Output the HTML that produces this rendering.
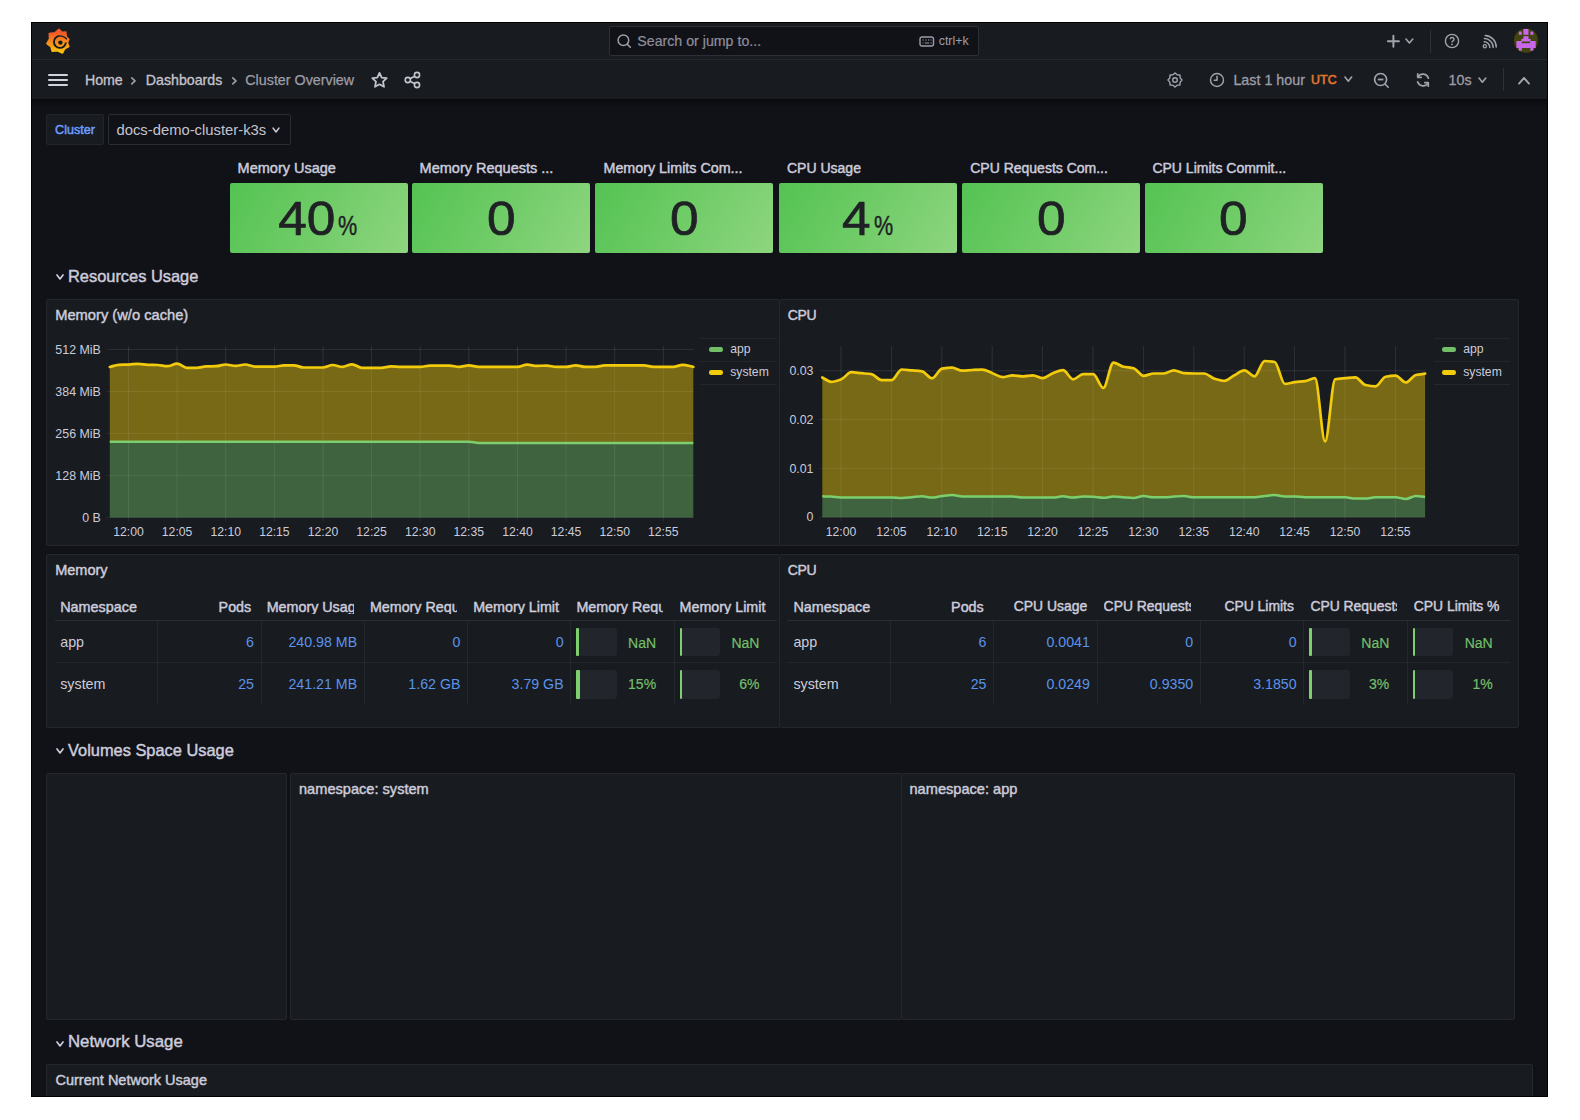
<!DOCTYPE html><html><head><meta charset="utf-8"><style>
*{box-sizing:border-box;margin:0;padding:0}
html,body{width:1580px;height:1120px;background:#fff;overflow:hidden}
body{position:relative;font-family:"Liberation Sans",sans-serif;color:#ccccdc}
.a{position:absolute}
.t{position:absolute;white-space:nowrap;line-height:1}
.m{-webkit-text-stroke:0.45px currentColor}
#app{position:absolute;left:31px;top:22px;width:1517px;height:1075px;background:#111217;border:1px solid #000;overflow:hidden}
.bar{position:absolute;left:32px;width:1515px;background:#181b1f}
.panel{position:absolute;background:#181b1f;border:1px solid #24272c;border-radius:2px}
.stat{position:absolute;top:183px;height:69.5px;width:178px;border-radius:2px;background:linear-gradient(120deg,#54c353 0%,#6dcb65 45%,#8ed57f 100%)}
.gauge{position:absolute;width:40.5px;height:28.5px;background:#22252b;border-radius:3px}
.gauge i{position:absolute;left:0;top:0;bottom:0;width:3px;background:#7fcf6e;border-radius:1px}
.icon{position:absolute;overflow:visible}
</style></head><body>
<div id="app"></div>
<div class="bar" style="top:23px;height:36px"></div>
<div class="a" style="left:32px;top:59px;width:1515px;height:1px;background:#25282d"></div>
<div class="bar" style="top:60px;height:39px"></div>
<div class="a" style="left:32px;top:99px;width:1515px;height:1px;background:#08090b"></div>
<div class="a" style="left:32px;top:100px;width:1515px;height:8px;background:linear-gradient(rgba(8,9,11,0.75),rgba(17,18,23,0))"></div>
<svg class="icon" style="left:44px;top:27px" width="28" height="28" viewBox="0 0 28 28">
<defs><linearGradient id="lg" x1="0" y1="0" x2="0" y2="1"><stop offset="0.15" stop-color="#f25a2a"/><stop offset="0.5" stop-color="#f6861e"/><stop offset="1" stop-color="#fcc80c"/></linearGradient></defs>
<polygon fill="url(#lg)" points="15.0,2.3 17.9,5.2 21.8,5.0 22.1,9.5 24.8,12.3 23.4,15.8 24.8,19.5 20.7,21.7 18.5,26.0 13.6,23.7 8.3,24.3 6.9,19.6 3.0,16.5 5.6,12.0 5.3,6.5 10.8,5.9" stroke="url(#lg)" stroke-width="1.6" stroke-linejoin="round"/>
<path d="M15.5,8.9 A6,6 0 1 0 21.9,15.5" fill="none" stroke="#181b1f" stroke-width="1.9"/>
<path d="M15.5,8.9 Q20,8.9 22.8,12.3" fill="none" stroke="#181b1f" stroke-width="1.4"/>
<circle cx="16.4" cy="15.6" r="2.2" fill="#181b1f"/>
</svg>
<div class="a" style="left:609px;top:26.4px;width:370px;height:29.6px;background:#111217;border:1px solid #2c2f35;border-radius:2px"></div>
<svg class="icon" style="left:616px;top:33px" width="16" height="16" viewBox="0 0 16 16"><circle cx="7.4" cy="7.3" r="5.3" fill="none" stroke="#9d9da8" stroke-width="1.5"/><path d="M11.3,11.2 L14.3,14.2" stroke="#9d9da8" stroke-width="1.6" stroke-linecap="round"/></svg>
<div class="t m" style="left:637.3px;top:34.23px;font-size:14.2px;color:#8f8f9b;-webkit-text-stroke-width:0.2px">Search or jump to...</div>
<svg class="icon" style="left:919px;top:35.5px" width="16" height="11" viewBox="0 0 16 11"><rect x="1" y="1" width="13.5" height="9" rx="2" fill="none" stroke="#9d9da8" stroke-width="1.4"/><path d="M3.6,4h1.2M6.3,4h1.2M9,4h1.2M11.5,4h1M3.6,7h0.8M5.8,7h4.4M11.5,7h1" stroke="#9d9da8" stroke-width="1.2"/></svg>
<div class="t" style="left:938.7px;top:34.56px;font-size:12.4px;color:#9d9da8;">ctrl+k</div>
<svg class="icon" style="left:1386px;top:34px" width="16" height="14"><path d="M7.4,1.8V12.8M1.9,7.3H12.9" stroke="#a3a3ae" stroke-width="2" stroke-linecap="round"/></svg>
<svg class="a" style="left:1404.2px;top:37.3px" width="10.8" height="8.0"><path d="M2,2L5.4,6.0L8.8,2" fill="none" stroke="#a3a3ae" stroke-width="1.6" stroke-linecap="round" stroke-linejoin="round"/></svg>
<div class="a" style="left:1430px;top:30px;width:1px;height:22.5px;background:#2f3237"></div>
<svg class="icon" style="left:1444px;top:33px" width="16" height="16" viewBox="0 0 16 16"><circle cx="8" cy="8" r="6.6" fill="none" stroke="#a3a3ae" stroke-width="1.4"/><path d="M6.2,6.3a1.9,1.9 0 1 1 2.6,1.8c-0.5,0.2-0.8,0.6-0.8,1.1v0.4" fill="none" stroke="#a3a3ae" stroke-width="1.4"/><circle cx="8" cy="11.4" r="0.85" fill="#a3a3ae"/></svg>
<svg class="icon" style="left:1482px;top:34px" width="16" height="16" viewBox="0 0 16 16"><circle cx="2.8" cy="12.2" r="1.6" fill="none" stroke="#a3a3ae" stroke-width="1.3"/><path d="M2.2,7.8a5.6,5.6 0 0 1 5.6,5.6M2.4,4.6a8.8,8.8 0 0 1 8.8,8.8M3.2,1.5a11.5,11.5 0 0 1 11,11.5" fill="none" stroke="#a3a3ae" stroke-width="1.5" stroke-linecap="round"/></svg>
<svg class="icon" style="left:1510px;top:26px" width="32" height="30" viewBox="0 0 32 30"><circle cx="16" cy="14.6" r="12.1" fill="#41440e"/>
<g fill="#c868e8"><rect x="13.4" y="3" width="5.1" height="5.8"/><rect x="8.8" y="5.6" width="3" height="3.2"/><rect x="20.4" y="5.6" width="2.9" height="3.2"/><rect x="13.4" y="10.2" width="5.1" height="2.9"/><rect x="11.3" y="12.9" width="9.3" height="2.7"/><rect x="6.4" y="15" width="19.3" height="7"/><rect x="8.8" y="21.8" width="3" height="2.9"/><rect x="20.4" y="21.8" width="2.9" height="2.9"/></g>
<rect x="11.8" y="15.5" width="8.3" height="1.7" fill="#41440e"/></svg>
<div class="a" style="left:48px;top:74px;width:19.7px;height:2.2px;background:#d2d2de;border-radius:1px"></div>
<div class="a" style="left:48px;top:79px;width:19.7px;height:2.2px;background:#d2d2de;border-radius:1px"></div>
<div class="a" style="left:48px;top:84px;width:19.7px;height:2.2px;background:#d2d2de;border-radius:1px"></div>
<div class="t m" style="left:84.9px;top:73.23px;font-size:14.2px;color:#c4c4d0;-webkit-text-stroke-width:0.3px">Home</div>
<svg class="icon" style="left:130.2px;top:75.6px" width="8" height="10" viewBox="0 0 8 10"><path d="M1.8,1.9L5,4.9L1.8,7.9" fill="none" stroke="#9d9da8" stroke-width="1.7" stroke-linecap="round" stroke-linejoin="round"/></svg>
<div class="t m" style="left:145.8px;top:73.23px;font-size:14.2px;color:#c4c4d0;-webkit-text-stroke-width:0.3px">Dashboards</div>
<svg class="icon" style="left:230.5px;top:75.6px" width="8" height="10" viewBox="0 0 8 10"><path d="M1.8,1.9L5,4.9L1.8,7.9" fill="none" stroke="#9d9da8" stroke-width="1.7" stroke-linecap="round" stroke-linejoin="round"/></svg>
<div class="t m" style="left:245.3px;top:73.14px;font-size:14.3px;color:#9d9da8;-webkit-text-stroke-width:0.25px">Cluster Overview</div>
<svg class="icon" style="left:370.0px;top:71.0px" width="19" height="18" viewBox="0 0 19 18"><path d="M9.5,1.9L11.7,6.6L16.7,7.2L13,10.7L14,15.8L9.5,13.3L5,15.8L6,10.7L2.3,7.2L7.3,6.6Z" fill="none" stroke="#c4c4d0" stroke-width="1.8" stroke-linejoin="round"/></svg>
<svg class="icon" style="left:403.0px;top:71.0px" width="19" height="18" viewBox="0 0 19 18"><circle cx="4.8" cy="9" r="2.6" fill="none" stroke="#c4c4d0" stroke-width="1.6"/><circle cx="14" cy="4" r="2.6" fill="none" stroke="#c4c4d0" stroke-width="1.6"/><circle cx="14" cy="14" r="2.6" fill="none" stroke="#c4c4d0" stroke-width="1.6"/><path d="M7,7.8L11.8,5.2M7,10.2L11.8,12.8" stroke="#c4c4d0" stroke-width="1.6"/></svg>
<svg class="icon" style="left:1166.5px;top:71.5px" width="16" height="16" viewBox="0 0 16 16"><path d="M8.00,1.00 L10.14,2.83 L12.95,3.05 L13.17,5.86 L15.00,8.00 L13.17,10.14 L12.95,12.95 L10.14,13.17 L8.00,15.00 L5.86,13.17 L3.05,12.95 L2.83,10.14 L1.00,8.00 L2.83,5.86 L3.05,3.05 L5.86,2.83Z" fill="none" stroke="#a3a3ae" stroke-width="1.4" stroke-linejoin="round"/><circle cx="8" cy="8" r="2.3" fill="none" stroke="#a3a3ae" stroke-width="1.4"/></svg>
<svg class="icon" style="left:1208.5px;top:71.5px" width="16" height="16" viewBox="0 0 16 16"><circle cx="8" cy="8" r="6.5" fill="none" stroke="#a3a3ae" stroke-width="1.4"/><path d="M8,4.3V8.2H5.3" fill="none" stroke="#a3a3ae" stroke-width="1.5" stroke-linecap="round" stroke-linejoin="round"/></svg>
<div class="t m" style="left:1233.4px;top:72.94px;font-size:14.3px;color:#9d9da8;-webkit-text-stroke-width:0.3px">Last 1 hour</div>
<div class="t m" style="left:1310.9px;top:74.16px;font-size:12.4px;color:#e0762e;-webkit-text-stroke-width:0.6px;letter-spacing:0.2px">UTC</div>
<svg class="a" style="left:1343.0px;top:75.2px" width="10.6" height="8.2"><path d="M2,2L5.3,6.2L8.6,2" fill="none" stroke="#a3a3ae" stroke-width="1.6" stroke-linecap="round" stroke-linejoin="round"/></svg>
<svg class="icon" style="left:1372.5px;top:71.5px" width="17" height="17" viewBox="0 0 17 17"><circle cx="7.6" cy="7.5" r="6" fill="none" stroke="#a3a3ae" stroke-width="1.7"/><path d="M4.8,7.5H10.4" stroke="#a3a3ae" stroke-width="1.8"/><path d="M12,12L15.2,15.2" stroke="#a3a3ae" stroke-width="1.6" stroke-linecap="round"/></svg>
<svg class="icon" style="left:1415.0px;top:71.5px" width="16" height="16" viewBox="0 0 16 16"><g transform="translate(16,0) scale(-1,1)"><path d="M2.6,6.2A5.8,5.8 0 0 1 13,4.8M13.4,9.8A5.8,5.8 0 0 1 3,11.2" fill="none" stroke="#a3a3ae" stroke-width="1.7" stroke-linecap="round"/><path d="M13.3,1.8V5.3H9.8M2.7,14.2V10.7H6.2" fill="none" stroke="#a3a3ae" stroke-width="1.7" stroke-linecap="round" stroke-linejoin="round"/></g></svg>
<div class="t m" style="left:1448.6px;top:73.14px;font-size:14.3px;color:#9d9da8;-webkit-text-stroke-width:0.3px">10s</div>
<svg class="a" style="left:1477.2px;top:75.6px" width="10.8" height="8.2"><path d="M2,2L5.4,6.2L8.8,2" fill="none" stroke="#a3a3ae" stroke-width="1.6" stroke-linecap="round" stroke-linejoin="round"/></svg>
<div class="a" style="left:1503px;top:68px;width:1px;height:23px;background:#2f3237"></div>
<svg class="a" style="left:1517.0px;top:75.5px" width="14.0" height="9.6"><path d="M2,7.6L7.0,2L12.0,7.6" fill="none" stroke="#a3a3ae" stroke-width="1.9" stroke-linecap="round" stroke-linejoin="round"/></svg>
<div class="a" style="left:46.4px;top:114.4px;width:57.6px;height:30.2px;background:#181b1f;border:1px solid #22252a;border-radius:2px"></div>
<div class="t m" style="left:55.1px;top:124.09px;font-size:12.6px;color:#6e9fff;">Cluster</div>
<div class="a" style="left:108px;top:114.4px;width:183px;height:30.2px;background:#111217;border:1px solid #2a2d33;border-radius:2px"></div>
<div class="t" style="left:116.5px;top:123.12px;font-size:14.8px;color:#c4c4d0;">docs-demo-cluster-k3s</div>
<svg class="a" style="left:271.0px;top:125.6px" width="10.0" height="8.0"><path d="M2,2L5.0,6.0L8.0,2" fill="none" stroke="#ccccdc" stroke-width="1.4" stroke-linecap="round" stroke-linejoin="round"/></svg>
<div class="t m" style="left:237.6px;top:160.88px;font-size:14.5px;color:#ccccdc;">Memory Usage</div>
<div class="stat" style="left:229.6px"></div>
<div class="t" style="left:229.6px;width:178px;top:194.50px;text-align:center;font-size:48px;color:#1f2125;-webkit-text-stroke:0.7px #1f2125"><span style="display:inline-block;transform:scaleX(1.07)">40</span><span style="display:inline-block;font-size:27px;-webkit-text-stroke:0.4px #1f2125;transform:scaleX(0.8);transform-origin:0 0;margin-left:4.5px;margin-right:-5px">%</span></div>
<div class="t m" style="left:419.6px;top:160.88px;font-size:14.5px;color:#ccccdc;">Memory Requests ...</div>
<div class="stat" style="left:412.1px"></div>
<div class="t" style="left:412.1px;width:178px;top:194.50px;text-align:center;font-size:48px;color:#1f2125;-webkit-text-stroke:0.7px #1f2125"><span style="display:inline-block;transform:scaleX(1.07)">0</span></div>
<div class="t m" style="left:603.5px;top:161.04px;font-size:14.3px;color:#ccccdc;">Memory Limits Com...</div>
<div class="stat" style="left:595.4px"></div>
<div class="t" style="left:595.4px;width:178px;top:194.50px;text-align:center;font-size:48px;color:#1f2125;-webkit-text-stroke:0.7px #1f2125"><span style="display:inline-block;transform:scaleX(1.07)">0</span></div>
<div class="t m" style="left:787.0px;top:161.30px;font-size:14.0px;color:#ccccdc;">CPU Usage</div>
<div class="stat" style="left:779.0px"></div>
<div class="t" style="left:779.0px;width:178px;top:194.50px;text-align:center;font-size:48px;color:#1f2125;-webkit-text-stroke:0.7px #1f2125"><span style="display:inline-block;transform:scaleX(1.07)">4</span><span style="display:inline-block;font-size:27px;-webkit-text-stroke:0.4px #1f2125;transform:scaleX(0.8);transform-origin:0 0;margin-left:4.5px;margin-right:-5px">%</span></div>
<div class="t m" style="left:970.2px;top:161.30px;font-size:14.0px;color:#ccccdc;">CPU Requests Com...</div>
<div class="stat" style="left:962.3px"></div>
<div class="t" style="left:962.3px;width:178px;top:194.50px;text-align:center;font-size:48px;color:#1f2125;-webkit-text-stroke:0.7px #1f2125"><span style="display:inline-block;transform:scaleX(1.07)">0</span></div>
<div class="t m" style="left:1152.4px;top:161.30px;font-size:14.0px;color:#ccccdc;">CPU Limits Commit...</div>
<div class="stat" style="left:1144.5px"></div>
<div class="t" style="left:1144.5px;width:178px;top:194.50px;text-align:center;font-size:48px;color:#1f2125;-webkit-text-stroke:0.7px #1f2125"><span style="display:inline-block;transform:scaleX(1.07)">0</span></div>
<svg class="a" style="left:54.6px;top:273.3px" width="10.0" height="7.9"><path d="M2,2L5.0,5.9L8.0,2" fill="none" stroke="#ccccdc" stroke-width="1.7" stroke-linecap="round" stroke-linejoin="round"/></svg>
<div class="t m" style="left:68.0px;top:267.86px;font-size:16.4px;color:#ccccdc;">Resources Usage</div>
<svg class="a" style="left:54.6px;top:747.4px" width="10.0" height="7.9"><path d="M2,2L5.0,5.9L8.0,2" fill="none" stroke="#ccccdc" stroke-width="1.7" stroke-linecap="round" stroke-linejoin="round"/></svg>
<div class="t m" style="left:68.0px;top:741.96px;font-size:16.4px;color:#ccccdc;">Volumes Space Usage</div>
<svg class="a" style="left:54.6px;top:1039.8px" width="10.0" height="7.9"><path d="M2,2L5.0,5.9L8.0,2" fill="none" stroke="#ccccdc" stroke-width="1.7" stroke-linecap="round" stroke-linejoin="round"/></svg>
<div class="t m" style="left:68.0px;top:1034.02px;font-size:16.8px;color:#ccccdc;">Network Usage</div>
<div class="panel" style="left:46px;top:298.5px;width:734px;height:247px"></div>
<div class="panel" style="left:779px;top:298.5px;width:739.5px;height:247px"></div>
<div class="t m" style="left:55.2px;top:307.90px;font-size:14.7px;color:#ccccdc;">Memory (w/o cache)</div>
<div class="t m" style="left:787.8px;top:308.20px;font-size:14px;color:#ccccdc;letter-spacing:-0.4px">CPU</div>
<svg class="a" style="left:0;top:0" width="1580" height="1120" viewBox="0 0 1580 1120"><path d="M106.3,517.6H693.8" stroke="rgba(204,204,220,0.09)" stroke-width="1"/><path d="M106.3,475.6H693.8" stroke="rgba(204,204,220,0.09)" stroke-width="1"/><path d="M106.3,433.6H693.8" stroke="rgba(204,204,220,0.09)" stroke-width="1"/><path d="M106.3,391.6H693.8" stroke="rgba(204,204,220,0.09)" stroke-width="1"/><path d="M106.3,349.6H693.8" stroke="rgba(204,204,220,0.09)" stroke-width="1"/><path d="M128.5,346V521.6" stroke="rgba(204,204,220,0.09)" stroke-width="1"/><path d="M177.1,346V521.6" stroke="rgba(204,204,220,0.09)" stroke-width="1"/><path d="M225.7,346V521.6" stroke="rgba(204,204,220,0.09)" stroke-width="1"/><path d="M274.4,346V521.6" stroke="rgba(204,204,220,0.09)" stroke-width="1"/><path d="M323.0,346V521.6" stroke="rgba(204,204,220,0.09)" stroke-width="1"/><path d="M371.6,346V521.6" stroke="rgba(204,204,220,0.09)" stroke-width="1"/><path d="M420.2,346V521.6" stroke="rgba(204,204,220,0.09)" stroke-width="1"/><path d="M468.8,346V521.6" stroke="rgba(204,204,220,0.09)" stroke-width="1"/><path d="M517.5,346V521.6" stroke="rgba(204,204,220,0.09)" stroke-width="1"/><path d="M566.1,346V521.6" stroke="rgba(204,204,220,0.09)" stroke-width="1"/><path d="M614.7,346V521.6" stroke="rgba(204,204,220,0.09)" stroke-width="1"/><path d="M663.3,346V521.6" stroke="rgba(204,204,220,0.09)" stroke-width="1"/><path d="M109.80,367.00 C112.79,366.27 115.78,364.91 118.77,364.80 C122.02,364.68 125.26,364.71 128.50,364.60 C131.74,364.49 134.98,363.80 138.22,363.80 C141.46,363.80 144.70,364.69 147.95,364.80 C151.19,364.91 154.43,364.89 157.67,365.00 C160.91,365.11 164.15,366.20 167.39,366.20 C170.64,366.20 173.88,363.60 177.12,363.60 C180.36,363.60 183.60,367.80 186.84,367.80 C190.08,367.80 193.32,367.80 196.57,367.80 C199.81,367.80 203.05,366.52 206.29,366.40 C209.53,366.28 212.77,366.32 216.01,366.20 C219.26,366.08 222.50,364.50 225.74,364.50 C228.98,364.50 232.22,365.90 235.46,365.90 C238.70,365.90 241.94,364.50 245.19,364.50 C248.43,364.50 251.67,366.60 254.91,366.60 C258.15,366.60 261.39,366.60 264.63,366.60 C267.88,366.60 271.12,366.60 274.36,366.60 C277.60,366.60 280.84,365.30 284.08,365.30 C287.32,365.30 290.56,365.30 293.81,365.30 C297.05,365.30 300.29,367.50 303.53,367.50 C306.77,367.50 310.01,367.50 313.25,367.50 C316.50,367.50 319.74,367.50 322.98,367.50 C326.22,367.50 329.46,365.00 332.70,365.00 C335.94,365.00 339.18,366.90 342.43,366.90 C345.67,366.90 348.91,364.30 352.15,364.30 C355.39,364.30 358.63,367.80 361.87,367.80 C365.12,367.80 368.36,367.80 371.60,367.80 C374.84,367.80 378.08,367.80 381.32,367.80 C384.56,367.80 387.80,366.40 391.05,366.40 C394.29,366.40 397.53,366.75 400.77,366.80 C404.01,366.85 407.25,366.90 410.49,366.90 C413.74,366.90 416.98,366.90 420.22,366.90 C423.46,366.90 426.70,365.60 429.94,365.60 C433.18,365.60 436.42,365.60 439.67,365.60 C442.91,365.60 446.15,365.60 449.39,365.60 C452.63,365.60 455.87,366.90 459.11,366.90 C462.36,366.90 465.60,365.40 468.84,365.40 C472.08,365.40 475.32,366.90 478.56,366.90 C481.80,366.90 485.04,366.90 488.29,366.90 C491.53,366.90 494.77,366.90 498.01,366.90 C501.25,366.90 504.49,366.90 507.73,366.90 C510.98,366.90 514.22,366.90 517.46,366.90 C520.70,366.90 523.94,364.70 527.18,364.70 C530.42,364.70 533.66,365.90 536.91,365.90 C540.15,365.90 543.39,365.60 546.63,365.60 C549.87,365.60 553.11,366.90 556.35,366.90 C559.60,366.90 562.84,366.90 566.08,366.90 C569.32,366.90 572.56,365.30 575.80,365.30 C579.04,365.30 582.28,366.90 585.53,366.90 C588.77,366.90 592.01,366.90 595.25,366.90 C598.49,366.90 601.73,365.40 604.97,365.40 C608.22,365.40 611.46,365.40 614.70,365.40 C617.94,365.40 621.18,365.40 624.42,365.40 C627.66,365.40 630.90,365.40 634.15,365.40 C637.39,365.40 640.63,365.40 643.87,365.40 C647.11,365.40 650.35,366.90 653.59,366.90 C656.84,366.90 660.08,366.90 663.32,366.90 C666.56,366.90 669.80,366.90 673.04,366.90 C676.28,366.90 679.52,364.80 682.77,364.80 C686.28,364.80 689.79,366.20 693.30,366.90 L693.30,442.90 C689.79,442.90 686.28,442.90 682.77,442.90 C679.52,442.90 676.28,442.90 673.04,442.90 C669.80,442.90 666.56,442.90 663.32,442.90 C660.08,442.90 656.84,442.90 653.59,442.90 C650.35,442.90 647.11,442.90 643.87,442.90 C640.63,442.90 637.39,442.90 634.15,442.90 C630.90,442.90 627.66,442.90 624.42,442.90 C621.18,442.90 617.94,442.90 614.70,442.90 C611.46,442.90 608.22,442.90 604.97,442.90 C601.73,442.90 598.49,442.90 595.25,442.90 C592.01,442.90 588.77,442.90 585.53,442.90 C582.28,442.90 579.04,442.90 575.80,442.90 C572.56,442.90 569.32,442.90 566.08,442.90 C562.84,442.90 559.60,442.90 556.35,442.90 C553.11,442.90 549.87,442.90 546.63,442.90 C543.39,442.90 540.15,442.90 536.91,442.90 C533.66,442.90 530.42,442.90 527.18,442.90 C523.94,442.90 520.70,442.90 517.46,442.90 C514.22,442.90 510.98,442.90 507.73,442.90 C504.49,442.90 501.25,442.90 498.01,442.90 C494.77,442.90 491.53,442.90 488.29,442.90 C485.04,442.90 481.80,442.90 478.56,442.90 C475.32,442.90 472.08,441.70 468.84,441.70 C465.60,441.70 462.36,441.70 459.11,441.70 C455.87,441.70 452.63,441.70 449.39,441.70 C446.15,441.70 442.91,441.70 439.67,441.70 C436.42,441.70 433.18,441.70 429.94,441.70 C426.70,441.70 423.46,441.70 420.22,441.70 C416.98,441.70 413.74,441.70 410.49,441.70 C407.25,441.70 404.01,441.70 400.77,441.70 C397.53,441.70 394.29,441.70 391.05,441.70 C387.80,441.70 384.56,441.70 381.32,441.70 C378.08,441.70 374.84,441.70 371.60,441.70 C368.36,441.70 365.12,441.70 361.87,441.70 C358.63,441.70 355.39,441.70 352.15,441.70 C348.91,441.70 345.67,441.70 342.43,441.70 C339.18,441.70 335.94,441.70 332.70,441.70 C329.46,441.70 326.22,441.70 322.98,441.70 C319.74,441.70 316.50,441.70 313.25,441.70 C310.01,441.70 306.77,441.70 303.53,441.70 C300.29,441.70 297.05,441.70 293.81,441.70 C290.56,441.70 287.32,441.70 284.08,441.70 C280.84,441.70 277.60,441.70 274.36,441.70 C271.12,441.70 267.88,441.70 264.63,441.70 C261.39,441.70 258.15,441.70 254.91,441.70 C251.67,441.70 248.43,441.70 245.19,441.70 C241.94,441.70 238.70,441.70 235.46,441.70 C232.22,441.70 228.98,441.70 225.74,441.70 C222.50,441.70 219.26,441.70 216.01,441.70 C212.77,441.70 209.53,441.70 206.29,441.70 C203.05,441.70 199.81,441.70 196.57,441.70 C193.32,441.70 190.08,441.70 186.84,441.70 C183.60,441.70 180.36,441.70 177.12,441.70 C173.88,441.70 170.64,441.70 167.39,441.70 C164.15,441.70 160.91,441.70 157.67,441.70 C154.43,441.70 151.19,441.70 147.95,441.70 C144.70,441.70 141.46,441.70 138.22,441.70 C134.98,441.70 131.74,441.70 128.50,441.70 C125.26,441.70 122.02,441.70 118.77,441.70 C115.78,441.70 112.79,441.70 109.80,441.70 Z" fill="rgba(242,204,12,0.44)"/><path d="M109.80,441.70 C112.79,441.70 115.78,441.70 118.77,441.70 C122.02,441.70 125.26,441.70 128.50,441.70 C131.74,441.70 134.98,441.70 138.22,441.70 C141.46,441.70 144.70,441.70 147.95,441.70 C151.19,441.70 154.43,441.70 157.67,441.70 C160.91,441.70 164.15,441.70 167.39,441.70 C170.64,441.70 173.88,441.70 177.12,441.70 C180.36,441.70 183.60,441.70 186.84,441.70 C190.08,441.70 193.32,441.70 196.57,441.70 C199.81,441.70 203.05,441.70 206.29,441.70 C209.53,441.70 212.77,441.70 216.01,441.70 C219.26,441.70 222.50,441.70 225.74,441.70 C228.98,441.70 232.22,441.70 235.46,441.70 C238.70,441.70 241.94,441.70 245.19,441.70 C248.43,441.70 251.67,441.70 254.91,441.70 C258.15,441.70 261.39,441.70 264.63,441.70 C267.88,441.70 271.12,441.70 274.36,441.70 C277.60,441.70 280.84,441.70 284.08,441.70 C287.32,441.70 290.56,441.70 293.81,441.70 C297.05,441.70 300.29,441.70 303.53,441.70 C306.77,441.70 310.01,441.70 313.25,441.70 C316.50,441.70 319.74,441.70 322.98,441.70 C326.22,441.70 329.46,441.70 332.70,441.70 C335.94,441.70 339.18,441.70 342.43,441.70 C345.67,441.70 348.91,441.70 352.15,441.70 C355.39,441.70 358.63,441.70 361.87,441.70 C365.12,441.70 368.36,441.70 371.60,441.70 C374.84,441.70 378.08,441.70 381.32,441.70 C384.56,441.70 387.80,441.70 391.05,441.70 C394.29,441.70 397.53,441.70 400.77,441.70 C404.01,441.70 407.25,441.70 410.49,441.70 C413.74,441.70 416.98,441.70 420.22,441.70 C423.46,441.70 426.70,441.70 429.94,441.70 C433.18,441.70 436.42,441.70 439.67,441.70 C442.91,441.70 446.15,441.70 449.39,441.70 C452.63,441.70 455.87,441.70 459.11,441.70 C462.36,441.70 465.60,441.70 468.84,441.70 C472.08,441.70 475.32,442.90 478.56,442.90 C481.80,442.90 485.04,442.90 488.29,442.90 C491.53,442.90 494.77,442.90 498.01,442.90 C501.25,442.90 504.49,442.90 507.73,442.90 C510.98,442.90 514.22,442.90 517.46,442.90 C520.70,442.90 523.94,442.90 527.18,442.90 C530.42,442.90 533.66,442.90 536.91,442.90 C540.15,442.90 543.39,442.90 546.63,442.90 C549.87,442.90 553.11,442.90 556.35,442.90 C559.60,442.90 562.84,442.90 566.08,442.90 C569.32,442.90 572.56,442.90 575.80,442.90 C579.04,442.90 582.28,442.90 585.53,442.90 C588.77,442.90 592.01,442.90 595.25,442.90 C598.49,442.90 601.73,442.90 604.97,442.90 C608.22,442.90 611.46,442.90 614.70,442.90 C617.94,442.90 621.18,442.90 624.42,442.90 C627.66,442.90 630.90,442.90 634.15,442.90 C637.39,442.90 640.63,442.90 643.87,442.90 C647.11,442.90 650.35,442.90 653.59,442.90 C656.84,442.90 660.08,442.90 663.32,442.90 C666.56,442.90 669.80,442.90 673.04,442.90 C676.28,442.90 679.52,442.90 682.77,442.90 C686.28,442.90 689.79,442.90 693.30,442.90 L693.3,517.6 L109.8,517.6 Z" fill="rgba(115,191,105,0.44)"/><path d="M109.8,517.6H693.3" stroke="rgba(204,204,220,0.05)" stroke-width="1"/><path d="M109.8,475.6H693.3" stroke="rgba(204,204,220,0.05)" stroke-width="1"/><path d="M109.8,433.6H693.3" stroke="rgba(204,204,220,0.05)" stroke-width="1"/><path d="M109.8,391.6H693.3" stroke="rgba(204,204,220,0.05)" stroke-width="1"/><path d="M109.8,349.6H693.3" stroke="rgba(204,204,220,0.05)" stroke-width="1"/><path d="M128.5,346V517.6" stroke="rgba(204,204,220,0.05)" stroke-width="1"/><path d="M177.1,346V517.6" stroke="rgba(204,204,220,0.05)" stroke-width="1"/><path d="M225.7,346V517.6" stroke="rgba(204,204,220,0.05)" stroke-width="1"/><path d="M274.4,346V517.6" stroke="rgba(204,204,220,0.05)" stroke-width="1"/><path d="M323.0,346V517.6" stroke="rgba(204,204,220,0.05)" stroke-width="1"/><path d="M371.6,346V517.6" stroke="rgba(204,204,220,0.05)" stroke-width="1"/><path d="M420.2,346V517.6" stroke="rgba(204,204,220,0.05)" stroke-width="1"/><path d="M468.8,346V517.6" stroke="rgba(204,204,220,0.05)" stroke-width="1"/><path d="M517.5,346V517.6" stroke="rgba(204,204,220,0.05)" stroke-width="1"/><path d="M566.1,346V517.6" stroke="rgba(204,204,220,0.05)" stroke-width="1"/><path d="M614.7,346V517.6" stroke="rgba(204,204,220,0.05)" stroke-width="1"/><path d="M663.3,346V517.6" stroke="rgba(204,204,220,0.05)" stroke-width="1"/><path d="M109.80,441.70 C112.79,441.70 115.78,441.70 118.77,441.70 C122.02,441.70 125.26,441.70 128.50,441.70 C131.74,441.70 134.98,441.70 138.22,441.70 C141.46,441.70 144.70,441.70 147.95,441.70 C151.19,441.70 154.43,441.70 157.67,441.70 C160.91,441.70 164.15,441.70 167.39,441.70 C170.64,441.70 173.88,441.70 177.12,441.70 C180.36,441.70 183.60,441.70 186.84,441.70 C190.08,441.70 193.32,441.70 196.57,441.70 C199.81,441.70 203.05,441.70 206.29,441.70 C209.53,441.70 212.77,441.70 216.01,441.70 C219.26,441.70 222.50,441.70 225.74,441.70 C228.98,441.70 232.22,441.70 235.46,441.70 C238.70,441.70 241.94,441.70 245.19,441.70 C248.43,441.70 251.67,441.70 254.91,441.70 C258.15,441.70 261.39,441.70 264.63,441.70 C267.88,441.70 271.12,441.70 274.36,441.70 C277.60,441.70 280.84,441.70 284.08,441.70 C287.32,441.70 290.56,441.70 293.81,441.70 C297.05,441.70 300.29,441.70 303.53,441.70 C306.77,441.70 310.01,441.70 313.25,441.70 C316.50,441.70 319.74,441.70 322.98,441.70 C326.22,441.70 329.46,441.70 332.70,441.70 C335.94,441.70 339.18,441.70 342.43,441.70 C345.67,441.70 348.91,441.70 352.15,441.70 C355.39,441.70 358.63,441.70 361.87,441.70 C365.12,441.70 368.36,441.70 371.60,441.70 C374.84,441.70 378.08,441.70 381.32,441.70 C384.56,441.70 387.80,441.70 391.05,441.70 C394.29,441.70 397.53,441.70 400.77,441.70 C404.01,441.70 407.25,441.70 410.49,441.70 C413.74,441.70 416.98,441.70 420.22,441.70 C423.46,441.70 426.70,441.70 429.94,441.70 C433.18,441.70 436.42,441.70 439.67,441.70 C442.91,441.70 446.15,441.70 449.39,441.70 C452.63,441.70 455.87,441.70 459.11,441.70 C462.36,441.70 465.60,441.70 468.84,441.70 C472.08,441.70 475.32,442.90 478.56,442.90 C481.80,442.90 485.04,442.90 488.29,442.90 C491.53,442.90 494.77,442.90 498.01,442.90 C501.25,442.90 504.49,442.90 507.73,442.90 C510.98,442.90 514.22,442.90 517.46,442.90 C520.70,442.90 523.94,442.90 527.18,442.90 C530.42,442.90 533.66,442.90 536.91,442.90 C540.15,442.90 543.39,442.90 546.63,442.90 C549.87,442.90 553.11,442.90 556.35,442.90 C559.60,442.90 562.84,442.90 566.08,442.90 C569.32,442.90 572.56,442.90 575.80,442.90 C579.04,442.90 582.28,442.90 585.53,442.90 C588.77,442.90 592.01,442.90 595.25,442.90 C598.49,442.90 601.73,442.90 604.97,442.90 C608.22,442.90 611.46,442.90 614.70,442.90 C617.94,442.90 621.18,442.90 624.42,442.90 C627.66,442.90 630.90,442.90 634.15,442.90 C637.39,442.90 640.63,442.90 643.87,442.90 C647.11,442.90 650.35,442.90 653.59,442.90 C656.84,442.90 660.08,442.90 663.32,442.90 C666.56,442.90 669.80,442.90 673.04,442.90 C676.28,442.90 679.52,442.90 682.77,442.90 C686.28,442.90 689.79,442.90 693.30,442.90" fill="none" stroke="#7ccf6c" stroke-width="2.5" stroke-linejoin="round"/><path d="M109.80,367.00 C112.79,366.27 115.78,364.91 118.77,364.80 C122.02,364.68 125.26,364.71 128.50,364.60 C131.74,364.49 134.98,363.80 138.22,363.80 C141.46,363.80 144.70,364.69 147.95,364.80 C151.19,364.91 154.43,364.89 157.67,365.00 C160.91,365.11 164.15,366.20 167.39,366.20 C170.64,366.20 173.88,363.60 177.12,363.60 C180.36,363.60 183.60,367.80 186.84,367.80 C190.08,367.80 193.32,367.80 196.57,367.80 C199.81,367.80 203.05,366.52 206.29,366.40 C209.53,366.28 212.77,366.32 216.01,366.20 C219.26,366.08 222.50,364.50 225.74,364.50 C228.98,364.50 232.22,365.90 235.46,365.90 C238.70,365.90 241.94,364.50 245.19,364.50 C248.43,364.50 251.67,366.60 254.91,366.60 C258.15,366.60 261.39,366.60 264.63,366.60 C267.88,366.60 271.12,366.60 274.36,366.60 C277.60,366.60 280.84,365.30 284.08,365.30 C287.32,365.30 290.56,365.30 293.81,365.30 C297.05,365.30 300.29,367.50 303.53,367.50 C306.77,367.50 310.01,367.50 313.25,367.50 C316.50,367.50 319.74,367.50 322.98,367.50 C326.22,367.50 329.46,365.00 332.70,365.00 C335.94,365.00 339.18,366.90 342.43,366.90 C345.67,366.90 348.91,364.30 352.15,364.30 C355.39,364.30 358.63,367.80 361.87,367.80 C365.12,367.80 368.36,367.80 371.60,367.80 C374.84,367.80 378.08,367.80 381.32,367.80 C384.56,367.80 387.80,366.40 391.05,366.40 C394.29,366.40 397.53,366.75 400.77,366.80 C404.01,366.85 407.25,366.90 410.49,366.90 C413.74,366.90 416.98,366.90 420.22,366.90 C423.46,366.90 426.70,365.60 429.94,365.60 C433.18,365.60 436.42,365.60 439.67,365.60 C442.91,365.60 446.15,365.60 449.39,365.60 C452.63,365.60 455.87,366.90 459.11,366.90 C462.36,366.90 465.60,365.40 468.84,365.40 C472.08,365.40 475.32,366.90 478.56,366.90 C481.80,366.90 485.04,366.90 488.29,366.90 C491.53,366.90 494.77,366.90 498.01,366.90 C501.25,366.90 504.49,366.90 507.73,366.90 C510.98,366.90 514.22,366.90 517.46,366.90 C520.70,366.90 523.94,364.70 527.18,364.70 C530.42,364.70 533.66,365.90 536.91,365.90 C540.15,365.90 543.39,365.60 546.63,365.60 C549.87,365.60 553.11,366.90 556.35,366.90 C559.60,366.90 562.84,366.90 566.08,366.90 C569.32,366.90 572.56,365.30 575.80,365.30 C579.04,365.30 582.28,366.90 585.53,366.90 C588.77,366.90 592.01,366.90 595.25,366.90 C598.49,366.90 601.73,365.40 604.97,365.40 C608.22,365.40 611.46,365.40 614.70,365.40 C617.94,365.40 621.18,365.40 624.42,365.40 C627.66,365.40 630.90,365.40 634.15,365.40 C637.39,365.40 640.63,365.40 643.87,365.40 C647.11,365.40 650.35,366.90 653.59,366.90 C656.84,366.90 660.08,366.90 663.32,366.90 C666.56,366.90 669.80,366.90 673.04,366.90 C676.28,366.90 679.52,364.80 682.77,364.80 C686.28,364.80 689.79,366.20 693.30,366.90" fill="none" stroke="#f2cc0c" stroke-width="2.7" stroke-linejoin="round" stroke-linecap="round"/></svg>
<div class="t" style="right:1479.2px;top:343.76px;font-size:12.4px;color:#ccccdc;">512 MiB</div>
<div class="t" style="right:1479.2px;top:385.76px;font-size:12.4px;color:#ccccdc;">384 MiB</div>
<div class="t" style="right:1479.2px;top:427.76px;font-size:12.4px;color:#ccccdc;">256 MiB</div>
<div class="t" style="right:1479.2px;top:469.76px;font-size:12.4px;color:#ccccdc;">128 MiB</div>
<div class="t" style="right:1479.2px;top:511.76px;font-size:12.4px;color:#ccccdc;">0 B</div>
<div class="t" style="left:28.5px;width:200px;text-align:center;top:526.13px;font-size:12.2px;color:#ccccdc;">12:00</div>
<div class="t" style="left:77.1px;width:200px;text-align:center;top:526.13px;font-size:12.2px;color:#ccccdc;">12:05</div>
<div class="t" style="left:125.7px;width:200px;text-align:center;top:526.13px;font-size:12.2px;color:#ccccdc;">12:10</div>
<div class="t" style="left:174.4px;width:200px;text-align:center;top:526.13px;font-size:12.2px;color:#ccccdc;">12:15</div>
<div class="t" style="left:223.0px;width:200px;text-align:center;top:526.13px;font-size:12.2px;color:#ccccdc;">12:20</div>
<div class="t" style="left:271.6px;width:200px;text-align:center;top:526.13px;font-size:12.2px;color:#ccccdc;">12:25</div>
<div class="t" style="left:320.2px;width:200px;text-align:center;top:526.13px;font-size:12.2px;color:#ccccdc;">12:30</div>
<div class="t" style="left:368.8px;width:200px;text-align:center;top:526.13px;font-size:12.2px;color:#ccccdc;">12:35</div>
<div class="t" style="left:417.5px;width:200px;text-align:center;top:526.13px;font-size:12.2px;color:#ccccdc;">12:40</div>
<div class="t" style="left:466.1px;width:200px;text-align:center;top:526.13px;font-size:12.2px;color:#ccccdc;">12:45</div>
<div class="t" style="left:514.7px;width:200px;text-align:center;top:526.13px;font-size:12.2px;color:#ccccdc;">12:50</div>
<div class="t" style="left:563.3px;width:200px;text-align:center;top:526.13px;font-size:12.2px;color:#ccccdc;">12:55</div>
<div class="a" style="left:701.0px;top:338px;width:76px;height:1px;background:#24272c"></div>
<div class="a" style="left:701.0px;top:361px;width:76px;height:1px;background:#24272c"></div>
<div class="a" style="left:701.0px;top:384px;width:76px;height:1px;background:#24272c"></div>
<div class="a" style="left:708.6px;top:347px;width:14px;height:4.6px;border-radius:2.3px;background:#73bf69"></div>
<div class="a" style="left:708.6px;top:370px;width:14px;height:4.6px;border-radius:2.3px;background:#f2cc0c"></div>
<div class="t" style="left:730.2px;top:343.33px;font-size:12.2px;color:#ccccdc;">app</div>
<div class="t" style="left:730.2px;top:366.43px;font-size:12.2px;color:#ccccdc;">system</div>
<svg class="a" style="left:0;top:0" width="1580" height="1120" viewBox="0 0 1580 1120"><path d="M818.8,517.2H1425.6" stroke="rgba(204,204,220,0.09)" stroke-width="1"/><path d="M818.8,468.4H1425.6" stroke="rgba(204,204,220,0.09)" stroke-width="1"/><path d="M818.8,419.6H1425.6" stroke="rgba(204,204,220,0.09)" stroke-width="1"/><path d="M818.8,370.8H1425.6" stroke="rgba(204,204,220,0.09)" stroke-width="1"/><path d="M841.0,346V521.2" stroke="rgba(204,204,220,0.09)" stroke-width="1"/><path d="M891.4,346V521.2" stroke="rgba(204,204,220,0.09)" stroke-width="1"/><path d="M941.8,346V521.2" stroke="rgba(204,204,220,0.09)" stroke-width="1"/><path d="M992.2,346V521.2" stroke="rgba(204,204,220,0.09)" stroke-width="1"/><path d="M1042.6,346V521.2" stroke="rgba(204,204,220,0.09)" stroke-width="1"/><path d="M1093.0,346V521.2" stroke="rgba(204,204,220,0.09)" stroke-width="1"/><path d="M1143.4,346V521.2" stroke="rgba(204,204,220,0.09)" stroke-width="1"/><path d="M1193.8,346V521.2" stroke="rgba(204,204,220,0.09)" stroke-width="1"/><path d="M1244.2,346V521.2" stroke="rgba(204,204,220,0.09)" stroke-width="1"/><path d="M1294.6,346V521.2" stroke="rgba(204,204,220,0.09)" stroke-width="1"/><path d="M1345.0,346V521.2" stroke="rgba(204,204,220,0.09)" stroke-width="1"/><path d="M1395.4,346V521.2" stroke="rgba(204,204,220,0.09)" stroke-width="1"/><path d="M822.30,377.50 C825.26,378.93 828.22,381.80 831.18,381.80 C834.54,381.80 837.90,380.53 841.26,379.30 C844.62,378.07 847.98,372.20 851.34,372.20 C854.70,372.20 858.06,372.87 861.42,373.20 C864.78,373.53 868.14,373.63 871.50,374.20 C874.86,374.77 878.22,380.10 881.58,380.10 C884.94,380.10 888.30,380.10 891.66,380.10 C895.02,380.10 898.38,369.50 901.74,369.50 C905.10,369.50 908.46,370.08 911.82,370.40 C915.18,370.72 918.54,370.82 921.90,371.40 C925.26,371.98 928.62,378.30 931.98,378.30 C935.34,378.30 938.70,369.30 942.06,368.70 C945.42,368.10 948.78,367.70 952.14,367.70 C955.50,367.70 958.86,370.70 962.22,370.70 C965.58,370.70 968.94,370.14 972.30,370.00 C975.66,369.86 979.02,369.70 982.38,369.70 C985.74,369.70 989.10,371.97 992.46,373.20 C995.82,374.43 999.18,377.10 1002.54,377.10 C1005.90,377.10 1009.26,375.30 1012.62,375.30 C1015.98,375.30 1019.34,376.30 1022.70,376.30 C1026.06,376.30 1029.42,375.30 1032.78,375.30 C1036.14,375.30 1039.50,378.10 1042.86,378.10 C1046.22,378.10 1049.58,374.44 1052.94,373.20 C1056.30,371.96 1059.66,370.20 1063.02,370.20 C1066.38,370.20 1069.74,379.30 1073.10,379.30 C1076.46,379.30 1079.82,374.20 1083.18,374.20 C1086.54,374.20 1089.90,374.20 1093.26,374.20 C1096.62,374.20 1099.98,387.90 1103.34,387.90 C1106.70,387.90 1110.06,362.60 1113.42,362.60 C1116.78,362.60 1120.14,365.97 1123.50,366.70 C1126.86,367.43 1130.22,367.36 1133.58,368.20 C1136.94,369.04 1140.30,375.80 1143.66,375.80 C1147.02,375.80 1150.38,373.50 1153.74,373.50 C1157.10,373.50 1160.46,373.50 1163.82,373.50 C1167.18,373.50 1170.54,370.30 1173.90,370.30 C1177.26,370.30 1180.62,372.87 1183.98,373.10 C1187.34,373.33 1190.70,373.50 1194.06,373.50 C1197.42,373.50 1200.78,373.50 1204.14,373.50 C1207.50,373.50 1210.86,377.54 1214.22,378.60 C1217.58,379.66 1220.94,380.90 1224.30,380.90 C1227.66,380.90 1231.02,377.06 1234.38,375.30 C1237.74,373.54 1241.10,370.30 1244.46,370.30 C1247.82,370.30 1251.18,376.30 1254.54,376.30 C1257.90,376.30 1261.26,361.00 1264.62,361.00 C1267.98,361.00 1271.34,361.36 1274.70,362.00 C1278.06,362.64 1281.42,383.90 1284.78,383.90 C1288.14,383.90 1291.50,382.50 1294.86,382.10 C1298.22,381.70 1301.58,381.66 1304.94,381.20 C1308.30,380.74 1311.66,378.20 1315.02,378.20 C1318.38,378.20 1321.74,441.50 1325.10,441.50 C1328.46,441.50 1331.82,380.02 1335.18,379.30 C1338.54,378.58 1341.90,378.51 1345.26,378.20 C1348.62,377.89 1351.98,377.40 1355.34,377.40 C1358.70,377.40 1362.06,384.21 1365.42,385.00 C1368.78,385.79 1372.14,386.40 1375.50,386.40 C1378.86,386.40 1382.22,377.36 1385.58,376.70 C1388.94,376.04 1392.30,375.60 1395.66,375.60 C1399.02,375.60 1402.38,382.50 1405.74,382.50 C1409.10,382.50 1412.46,375.78 1415.82,375.00 C1418.91,374.28 1422.01,374.13 1425.10,373.70 L1425.10,497.00 C1422.01,496.67 1418.91,496.00 1415.82,496.00 C1412.46,496.00 1409.10,499.00 1405.74,499.00 C1402.38,499.00 1399.02,497.30 1395.66,497.30 C1392.30,497.30 1388.94,497.30 1385.58,497.30 C1382.22,497.30 1378.86,497.30 1375.50,497.30 C1372.14,497.30 1368.78,498.50 1365.42,498.50 C1362.06,498.50 1358.70,498.50 1355.34,498.50 C1351.98,498.50 1348.62,497.30 1345.26,497.30 C1341.90,497.30 1338.54,497.30 1335.18,497.30 C1331.82,497.30 1328.46,497.30 1325.10,497.30 C1321.74,497.30 1318.38,497.30 1315.02,497.30 C1311.66,497.30 1308.30,497.30 1304.94,497.30 C1301.58,497.30 1298.22,496.40 1294.86,496.40 C1291.50,496.40 1288.14,496.40 1284.78,496.40 C1281.42,496.40 1278.06,495.00 1274.70,495.00 C1271.34,495.00 1267.98,495.62 1264.62,496.00 C1261.26,496.38 1257.90,497.30 1254.54,497.30 C1251.18,497.30 1247.82,497.30 1244.46,497.30 C1241.10,497.30 1237.74,497.30 1234.38,497.30 C1231.02,497.30 1227.66,497.30 1224.30,497.30 C1220.94,497.30 1217.58,497.30 1214.22,497.30 C1210.86,497.30 1207.50,497.30 1204.14,497.30 C1200.78,497.30 1197.42,497.30 1194.06,497.30 C1190.70,497.30 1187.34,496.00 1183.98,496.00 C1180.62,496.00 1177.26,496.38 1173.90,496.60 C1170.54,496.82 1167.18,497.30 1163.82,497.30 C1160.46,497.30 1157.10,497.30 1153.74,497.30 C1150.38,497.30 1147.02,496.00 1143.66,496.00 C1140.30,496.00 1136.94,498.00 1133.58,498.00 C1130.22,498.00 1126.86,497.45 1123.50,497.20 C1120.14,496.95 1116.78,496.50 1113.42,496.50 C1110.06,496.50 1106.70,497.80 1103.34,497.80 C1099.98,497.80 1096.62,496.91 1093.26,496.80 C1089.90,496.69 1086.54,496.60 1083.18,496.60 C1079.82,496.60 1076.46,497.60 1073.10,497.60 C1069.74,497.60 1066.38,496.30 1063.02,496.30 C1059.66,496.30 1056.30,497.60 1052.94,497.60 C1049.58,497.60 1046.22,497.60 1042.86,497.60 C1039.50,497.60 1036.14,497.60 1032.78,497.60 C1029.42,497.60 1026.06,497.60 1022.70,497.60 C1019.34,497.60 1015.98,496.60 1012.62,496.60 C1009.26,496.60 1005.90,496.60 1002.54,496.60 C999.18,496.60 995.82,496.60 992.46,496.60 C989.10,496.60 985.74,496.60 982.38,496.60 C979.02,496.60 975.66,496.60 972.30,496.60 C968.94,496.60 965.58,496.52 962.22,496.40 C958.86,496.28 955.50,495.00 952.14,495.00 C948.78,495.00 945.42,495.59 942.06,496.00 C938.70,496.41 935.34,497.60 931.98,497.60 C928.62,497.60 925.26,496.30 921.90,496.30 C918.54,496.30 915.18,496.92 911.82,497.20 C908.46,497.48 905.10,498.00 901.74,498.00 C898.38,498.00 895.02,497.40 891.66,497.40 C888.30,497.40 884.94,497.40 881.58,497.40 C878.22,497.40 874.86,497.40 871.50,497.40 C868.14,497.40 864.78,497.40 861.42,497.40 C858.06,497.40 854.70,497.40 851.34,497.40 C847.98,497.40 844.62,497.40 841.26,497.40 C837.90,497.40 834.54,496.76 831.18,496.60 C828.22,496.46 825.26,496.40 822.30,496.30 Z" fill="rgba(242,204,12,0.44)"/><path d="M822.30,496.30 C825.26,496.40 828.22,496.46 831.18,496.60 C834.54,496.76 837.90,497.40 841.26,497.40 C844.62,497.40 847.98,497.40 851.34,497.40 C854.70,497.40 858.06,497.40 861.42,497.40 C864.78,497.40 868.14,497.40 871.50,497.40 C874.86,497.40 878.22,497.40 881.58,497.40 C884.94,497.40 888.30,497.40 891.66,497.40 C895.02,497.40 898.38,498.00 901.74,498.00 C905.10,498.00 908.46,497.48 911.82,497.20 C915.18,496.92 918.54,496.30 921.90,496.30 C925.26,496.30 928.62,497.60 931.98,497.60 C935.34,497.60 938.70,496.41 942.06,496.00 C945.42,495.59 948.78,495.00 952.14,495.00 C955.50,495.00 958.86,496.28 962.22,496.40 C965.58,496.52 968.94,496.60 972.30,496.60 C975.66,496.60 979.02,496.60 982.38,496.60 C985.74,496.60 989.10,496.60 992.46,496.60 C995.82,496.60 999.18,496.60 1002.54,496.60 C1005.90,496.60 1009.26,496.60 1012.62,496.60 C1015.98,496.60 1019.34,497.60 1022.70,497.60 C1026.06,497.60 1029.42,497.60 1032.78,497.60 C1036.14,497.60 1039.50,497.60 1042.86,497.60 C1046.22,497.60 1049.58,497.60 1052.94,497.60 C1056.30,497.60 1059.66,496.30 1063.02,496.30 C1066.38,496.30 1069.74,497.60 1073.10,497.60 C1076.46,497.60 1079.82,496.60 1083.18,496.60 C1086.54,496.60 1089.90,496.69 1093.26,496.80 C1096.62,496.91 1099.98,497.80 1103.34,497.80 C1106.70,497.80 1110.06,496.50 1113.42,496.50 C1116.78,496.50 1120.14,496.95 1123.50,497.20 C1126.86,497.45 1130.22,498.00 1133.58,498.00 C1136.94,498.00 1140.30,496.00 1143.66,496.00 C1147.02,496.00 1150.38,497.30 1153.74,497.30 C1157.10,497.30 1160.46,497.30 1163.82,497.30 C1167.18,497.30 1170.54,496.82 1173.90,496.60 C1177.26,496.38 1180.62,496.00 1183.98,496.00 C1187.34,496.00 1190.70,497.30 1194.06,497.30 C1197.42,497.30 1200.78,497.30 1204.14,497.30 C1207.50,497.30 1210.86,497.30 1214.22,497.30 C1217.58,497.30 1220.94,497.30 1224.30,497.30 C1227.66,497.30 1231.02,497.30 1234.38,497.30 C1237.74,497.30 1241.10,497.30 1244.46,497.30 C1247.82,497.30 1251.18,497.30 1254.54,497.30 C1257.90,497.30 1261.26,496.38 1264.62,496.00 C1267.98,495.62 1271.34,495.00 1274.70,495.00 C1278.06,495.00 1281.42,496.40 1284.78,496.40 C1288.14,496.40 1291.50,496.40 1294.86,496.40 C1298.22,496.40 1301.58,497.30 1304.94,497.30 C1308.30,497.30 1311.66,497.30 1315.02,497.30 C1318.38,497.30 1321.74,497.30 1325.10,497.30 C1328.46,497.30 1331.82,497.30 1335.18,497.30 C1338.54,497.30 1341.90,497.30 1345.26,497.30 C1348.62,497.30 1351.98,498.50 1355.34,498.50 C1358.70,498.50 1362.06,498.50 1365.42,498.50 C1368.78,498.50 1372.14,497.30 1375.50,497.30 C1378.86,497.30 1382.22,497.30 1385.58,497.30 C1388.94,497.30 1392.30,497.30 1395.66,497.30 C1399.02,497.30 1402.38,499.00 1405.74,499.00 C1409.10,499.00 1412.46,496.00 1415.82,496.00 C1418.91,496.00 1422.01,496.67 1425.10,497.00 L1425.1,517.2 L822.3,517.2 Z" fill="rgba(115,191,105,0.44)"/><path d="M822.3,517.2H1425.1" stroke="rgba(204,204,220,0.05)" stroke-width="1"/><path d="M822.3,468.4H1425.1" stroke="rgba(204,204,220,0.05)" stroke-width="1"/><path d="M822.3,419.6H1425.1" stroke="rgba(204,204,220,0.05)" stroke-width="1"/><path d="M822.3,370.8H1425.1" stroke="rgba(204,204,220,0.05)" stroke-width="1"/><path d="M841.0,346V517.2" stroke="rgba(204,204,220,0.05)" stroke-width="1"/><path d="M891.4,346V517.2" stroke="rgba(204,204,220,0.05)" stroke-width="1"/><path d="M941.8,346V517.2" stroke="rgba(204,204,220,0.05)" stroke-width="1"/><path d="M992.2,346V517.2" stroke="rgba(204,204,220,0.05)" stroke-width="1"/><path d="M1042.6,346V517.2" stroke="rgba(204,204,220,0.05)" stroke-width="1"/><path d="M1093.0,346V517.2" stroke="rgba(204,204,220,0.05)" stroke-width="1"/><path d="M1143.4,346V517.2" stroke="rgba(204,204,220,0.05)" stroke-width="1"/><path d="M1193.8,346V517.2" stroke="rgba(204,204,220,0.05)" stroke-width="1"/><path d="M1244.2,346V517.2" stroke="rgba(204,204,220,0.05)" stroke-width="1"/><path d="M1294.6,346V517.2" stroke="rgba(204,204,220,0.05)" stroke-width="1"/><path d="M1345.0,346V517.2" stroke="rgba(204,204,220,0.05)" stroke-width="1"/><path d="M1395.4,346V517.2" stroke="rgba(204,204,220,0.05)" stroke-width="1"/><path d="M822.30,496.30 C825.26,496.40 828.22,496.46 831.18,496.60 C834.54,496.76 837.90,497.40 841.26,497.40 C844.62,497.40 847.98,497.40 851.34,497.40 C854.70,497.40 858.06,497.40 861.42,497.40 C864.78,497.40 868.14,497.40 871.50,497.40 C874.86,497.40 878.22,497.40 881.58,497.40 C884.94,497.40 888.30,497.40 891.66,497.40 C895.02,497.40 898.38,498.00 901.74,498.00 C905.10,498.00 908.46,497.48 911.82,497.20 C915.18,496.92 918.54,496.30 921.90,496.30 C925.26,496.30 928.62,497.60 931.98,497.60 C935.34,497.60 938.70,496.41 942.06,496.00 C945.42,495.59 948.78,495.00 952.14,495.00 C955.50,495.00 958.86,496.28 962.22,496.40 C965.58,496.52 968.94,496.60 972.30,496.60 C975.66,496.60 979.02,496.60 982.38,496.60 C985.74,496.60 989.10,496.60 992.46,496.60 C995.82,496.60 999.18,496.60 1002.54,496.60 C1005.90,496.60 1009.26,496.60 1012.62,496.60 C1015.98,496.60 1019.34,497.60 1022.70,497.60 C1026.06,497.60 1029.42,497.60 1032.78,497.60 C1036.14,497.60 1039.50,497.60 1042.86,497.60 C1046.22,497.60 1049.58,497.60 1052.94,497.60 C1056.30,497.60 1059.66,496.30 1063.02,496.30 C1066.38,496.30 1069.74,497.60 1073.10,497.60 C1076.46,497.60 1079.82,496.60 1083.18,496.60 C1086.54,496.60 1089.90,496.69 1093.26,496.80 C1096.62,496.91 1099.98,497.80 1103.34,497.80 C1106.70,497.80 1110.06,496.50 1113.42,496.50 C1116.78,496.50 1120.14,496.95 1123.50,497.20 C1126.86,497.45 1130.22,498.00 1133.58,498.00 C1136.94,498.00 1140.30,496.00 1143.66,496.00 C1147.02,496.00 1150.38,497.30 1153.74,497.30 C1157.10,497.30 1160.46,497.30 1163.82,497.30 C1167.18,497.30 1170.54,496.82 1173.90,496.60 C1177.26,496.38 1180.62,496.00 1183.98,496.00 C1187.34,496.00 1190.70,497.30 1194.06,497.30 C1197.42,497.30 1200.78,497.30 1204.14,497.30 C1207.50,497.30 1210.86,497.30 1214.22,497.30 C1217.58,497.30 1220.94,497.30 1224.30,497.30 C1227.66,497.30 1231.02,497.30 1234.38,497.30 C1237.74,497.30 1241.10,497.30 1244.46,497.30 C1247.82,497.30 1251.18,497.30 1254.54,497.30 C1257.90,497.30 1261.26,496.38 1264.62,496.00 C1267.98,495.62 1271.34,495.00 1274.70,495.00 C1278.06,495.00 1281.42,496.40 1284.78,496.40 C1288.14,496.40 1291.50,496.40 1294.86,496.40 C1298.22,496.40 1301.58,497.30 1304.94,497.30 C1308.30,497.30 1311.66,497.30 1315.02,497.30 C1318.38,497.30 1321.74,497.30 1325.10,497.30 C1328.46,497.30 1331.82,497.30 1335.18,497.30 C1338.54,497.30 1341.90,497.30 1345.26,497.30 C1348.62,497.30 1351.98,498.50 1355.34,498.50 C1358.70,498.50 1362.06,498.50 1365.42,498.50 C1368.78,498.50 1372.14,497.30 1375.50,497.30 C1378.86,497.30 1382.22,497.30 1385.58,497.30 C1388.94,497.30 1392.30,497.30 1395.66,497.30 C1399.02,497.30 1402.38,499.00 1405.74,499.00 C1409.10,499.00 1412.46,496.00 1415.82,496.00 C1418.91,496.00 1422.01,496.67 1425.10,497.00" fill="none" stroke="#7ccf6c" stroke-width="2.5" stroke-linejoin="round"/><path d="M822.30,377.50 C825.26,378.93 828.22,381.80 831.18,381.80 C834.54,381.80 837.90,380.53 841.26,379.30 C844.62,378.07 847.98,372.20 851.34,372.20 C854.70,372.20 858.06,372.87 861.42,373.20 C864.78,373.53 868.14,373.63 871.50,374.20 C874.86,374.77 878.22,380.10 881.58,380.10 C884.94,380.10 888.30,380.10 891.66,380.10 C895.02,380.10 898.38,369.50 901.74,369.50 C905.10,369.50 908.46,370.08 911.82,370.40 C915.18,370.72 918.54,370.82 921.90,371.40 C925.26,371.98 928.62,378.30 931.98,378.30 C935.34,378.30 938.70,369.30 942.06,368.70 C945.42,368.10 948.78,367.70 952.14,367.70 C955.50,367.70 958.86,370.70 962.22,370.70 C965.58,370.70 968.94,370.14 972.30,370.00 C975.66,369.86 979.02,369.70 982.38,369.70 C985.74,369.70 989.10,371.97 992.46,373.20 C995.82,374.43 999.18,377.10 1002.54,377.10 C1005.90,377.10 1009.26,375.30 1012.62,375.30 C1015.98,375.30 1019.34,376.30 1022.70,376.30 C1026.06,376.30 1029.42,375.30 1032.78,375.30 C1036.14,375.30 1039.50,378.10 1042.86,378.10 C1046.22,378.10 1049.58,374.44 1052.94,373.20 C1056.30,371.96 1059.66,370.20 1063.02,370.20 C1066.38,370.20 1069.74,379.30 1073.10,379.30 C1076.46,379.30 1079.82,374.20 1083.18,374.20 C1086.54,374.20 1089.90,374.20 1093.26,374.20 C1096.62,374.20 1099.98,387.90 1103.34,387.90 C1106.70,387.90 1110.06,362.60 1113.42,362.60 C1116.78,362.60 1120.14,365.97 1123.50,366.70 C1126.86,367.43 1130.22,367.36 1133.58,368.20 C1136.94,369.04 1140.30,375.80 1143.66,375.80 C1147.02,375.80 1150.38,373.50 1153.74,373.50 C1157.10,373.50 1160.46,373.50 1163.82,373.50 C1167.18,373.50 1170.54,370.30 1173.90,370.30 C1177.26,370.30 1180.62,372.87 1183.98,373.10 C1187.34,373.33 1190.70,373.50 1194.06,373.50 C1197.42,373.50 1200.78,373.50 1204.14,373.50 C1207.50,373.50 1210.86,377.54 1214.22,378.60 C1217.58,379.66 1220.94,380.90 1224.30,380.90 C1227.66,380.90 1231.02,377.06 1234.38,375.30 C1237.74,373.54 1241.10,370.30 1244.46,370.30 C1247.82,370.30 1251.18,376.30 1254.54,376.30 C1257.90,376.30 1261.26,361.00 1264.62,361.00 C1267.98,361.00 1271.34,361.36 1274.70,362.00 C1278.06,362.64 1281.42,383.90 1284.78,383.90 C1288.14,383.90 1291.50,382.50 1294.86,382.10 C1298.22,381.70 1301.58,381.66 1304.94,381.20 C1308.30,380.74 1311.66,378.20 1315.02,378.20 C1318.38,378.20 1321.74,441.50 1325.10,441.50 C1328.46,441.50 1331.82,380.02 1335.18,379.30 C1338.54,378.58 1341.90,378.51 1345.26,378.20 C1348.62,377.89 1351.98,377.40 1355.34,377.40 C1358.70,377.40 1362.06,384.21 1365.42,385.00 C1368.78,385.79 1372.14,386.40 1375.50,386.40 C1378.86,386.40 1382.22,377.36 1385.58,376.70 C1388.94,376.04 1392.30,375.60 1395.66,375.60 C1399.02,375.60 1402.38,382.50 1405.74,382.50 C1409.10,382.50 1412.46,375.78 1415.82,375.00 C1418.91,374.28 1422.01,374.13 1425.10,373.70" fill="none" stroke="#f2cc0c" stroke-width="2.7" stroke-linejoin="round" stroke-linecap="round"/></svg>
<div class="t" style="right:766.5px;top:364.96px;font-size:12.4px;color:#ccccdc;">0.03</div>
<div class="t" style="right:766.5px;top:413.76px;font-size:12.4px;color:#ccccdc;">0.02</div>
<div class="t" style="right:766.5px;top:462.56px;font-size:12.4px;color:#ccccdc;">0.01</div>
<div class="t" style="right:766.5px;top:511.36px;font-size:12.4px;color:#ccccdc;">0</div>
<div class="t" style="left:741.0px;width:200px;text-align:center;top:526.13px;font-size:12.2px;color:#ccccdc;">12:00</div>
<div class="t" style="left:791.4px;width:200px;text-align:center;top:526.13px;font-size:12.2px;color:#ccccdc;">12:05</div>
<div class="t" style="left:841.8px;width:200px;text-align:center;top:526.13px;font-size:12.2px;color:#ccccdc;">12:10</div>
<div class="t" style="left:892.2px;width:200px;text-align:center;top:526.13px;font-size:12.2px;color:#ccccdc;">12:15</div>
<div class="t" style="left:942.6px;width:200px;text-align:center;top:526.13px;font-size:12.2px;color:#ccccdc;">12:20</div>
<div class="t" style="left:993.0px;width:200px;text-align:center;top:526.13px;font-size:12.2px;color:#ccccdc;">12:25</div>
<div class="t" style="left:1043.4px;width:200px;text-align:center;top:526.13px;font-size:12.2px;color:#ccccdc;">12:30</div>
<div class="t" style="left:1093.8px;width:200px;text-align:center;top:526.13px;font-size:12.2px;color:#ccccdc;">12:35</div>
<div class="t" style="left:1144.2px;width:200px;text-align:center;top:526.13px;font-size:12.2px;color:#ccccdc;">12:40</div>
<div class="t" style="left:1194.6px;width:200px;text-align:center;top:526.13px;font-size:12.2px;color:#ccccdc;">12:45</div>
<div class="t" style="left:1245.0px;width:200px;text-align:center;top:526.13px;font-size:12.2px;color:#ccccdc;">12:50</div>
<div class="t" style="left:1295.4px;width:200px;text-align:center;top:526.13px;font-size:12.2px;color:#ccccdc;">12:55</div>
<div class="a" style="left:1434.0px;top:338px;width:76px;height:1px;background:#24272c"></div>
<div class="a" style="left:1434.0px;top:361px;width:76px;height:1px;background:#24272c"></div>
<div class="a" style="left:1434.0px;top:384px;width:76px;height:1px;background:#24272c"></div>
<div class="a" style="left:1441.6px;top:347px;width:14px;height:4.6px;border-radius:2.3px;background:#73bf69"></div>
<div class="a" style="left:1441.6px;top:370px;width:14px;height:4.6px;border-radius:2.3px;background:#f2cc0c"></div>
<div class="t" style="left:1463.2px;top:343.33px;font-size:12.2px;color:#ccccdc;">app</div>
<div class="t" style="left:1463.2px;top:366.43px;font-size:12.2px;color:#ccccdc;">system</div>
<div class="panel" style="left:46px;top:554px;width:734px;height:174px"></div>
<div class="panel" style="left:779px;top:554px;width:739.5px;height:174px"></div>
<div class="t m" style="left:55.2px;top:563.17px;font-size:14.5px;color:#ccccdc;">Memory</div>
<div class="t m" style="left:787.8px;top:563.20px;font-size:14px;color:#ccccdc;letter-spacing:-0.4px">CPU</div>
<div class="a" style="left:54.9px;top:620px;width:722.0px;height:1px;background:#2a2d32"></div>
<div class="a" style="left:54.9px;top:662px;width:722.0px;height:1px;background:#24272c"></div>
<div class="a" style="left:157.4px;top:621px;width:1px;height:83px;background:#24272c"></div>
<div class="a" style="left:260.7px;top:621px;width:1px;height:83px;background:#24272c"></div>
<div class="a" style="left:363.9px;top:621px;width:1px;height:83px;background:#24272c"></div>
<div class="a" style="left:467.2px;top:621px;width:1px;height:83px;background:#24272c"></div>
<div class="a" style="left:570.4px;top:621px;width:1px;height:83px;background:#24272c"></div>
<div class="a" style="left:673.6px;top:621px;width:1px;height:83px;background:#24272c"></div>
<div class="t m" style="left:60.2px;top:599.76px;width:86.9px;overflow:hidden;font-size:14.4px;color:#ccccdc">Namespace</div>
<div class="t m" style="right:1328.8px;top:599.85px;font-size:14.3px;color:#ccccdc;">Pods</div>
<div class="t m" style="left:266.7px;top:599.85px;width:86.9px;overflow:hidden;font-size:14.3px;color:#ccccdc">Memory Usage</div>
<div class="t m" style="left:369.9px;top:599.85px;width:86.9px;overflow:hidden;font-size:14.3px;color:#ccccdc">Memory Requests</div>
<div class="t m" style="left:473.2px;top:599.85px;width:86.9px;overflow:hidden;font-size:14.3px;color:#ccccdc">Memory Limit</div>
<div class="t m" style="left:576.4px;top:599.85px;width:86.9px;overflow:hidden;font-size:14.3px;color:#ccccdc">Memory Requests %</div>
<div class="t m" style="left:679.6px;top:599.85px;width:86.9px;overflow:hidden;font-size:14.3px;color:#ccccdc">Memory Limits %</div>
<div class="t" style="left:60.2px;top:635.25px;font-size:14.3px;color:#ccccdc;">app</div>
<div class="t" style="right:1326.1px;top:635.33px;font-size:14.2px;color:#5b93ea;">6</div>
<div class="t" style="right:1222.9px;top:635.33px;font-size:14.2px;color:#5b93ea;">240.98 MB</div>
<div class="t" style="right:1119.6px;top:635.33px;font-size:14.2px;color:#5b93ea;">0</div>
<div class="t" style="right:1016.4px;top:635.33px;font-size:14.2px;color:#5b93ea;">0</div>
<div class="gauge" style="left:576.4px;top:627.8px"><i style="width:2.4px"></i></div>
<div class="t m" style="right:923.9px;top:635.50px;font-size:14.0px;color:#73bf69;-webkit-text-stroke-width:0.2px">NaN</div>
<div class="gauge" style="left:679.6px;top:627.8px"><i style="width:2.4px"></i></div>
<div class="t m" style="right:820.6px;top:635.50px;font-size:14.0px;color:#73bf69;-webkit-text-stroke-width:0.2px">NaN</div>
<div class="t" style="left:60.2px;top:677.10px;font-size:14.3px;color:#ccccdc;">system</div>
<div class="t" style="right:1326.1px;top:677.18px;font-size:14.2px;color:#5b93ea;">25</div>
<div class="t" style="right:1222.9px;top:677.18px;font-size:14.2px;color:#5b93ea;">241.21 MB</div>
<div class="t" style="right:1119.6px;top:677.18px;font-size:14.2px;color:#5b93ea;">1.62 GB</div>
<div class="t" style="right:1016.4px;top:677.18px;font-size:14.2px;color:#5b93ea;">3.79 GB</div>
<div class="gauge" style="left:576.4px;top:670.0px"><i style="width:3.5px"></i></div>
<div class="t m" style="right:923.9px;top:677.35px;font-size:14.0px;color:#73bf69;-webkit-text-stroke-width:0.2px">15%</div>
<div class="gauge" style="left:679.6px;top:670.0px"><i style="width:2.8px"></i></div>
<div class="t m" style="right:820.6px;top:677.35px;font-size:14.0px;color:#73bf69;-webkit-text-stroke-width:0.2px">6%</div>
<div class="a" style="left:787.4px;top:620px;width:722.8px;height:1px;background:#2a2d32"></div>
<div class="a" style="left:787.4px;top:662px;width:722.8px;height:1px;background:#24272c"></div>
<div class="a" style="left:889.8px;top:621px;width:1px;height:83px;background:#24272c"></div>
<div class="a" style="left:993.2px;top:621px;width:1px;height:83px;background:#24272c"></div>
<div class="a" style="left:1096.6px;top:621px;width:1px;height:83px;background:#24272c"></div>
<div class="a" style="left:1200.0px;top:621px;width:1px;height:83px;background:#24272c"></div>
<div class="a" style="left:1303.4px;top:621px;width:1px;height:83px;background:#24272c"></div>
<div class="a" style="left:1406.8px;top:621px;width:1px;height:83px;background:#24272c"></div>
<div class="t m" style="left:793.4px;top:599.76px;width:87.1px;overflow:hidden;font-size:14.4px;color:#ccccdc">Namespace</div>
<div class="t m" style="right:596.3px;top:599.85px;font-size:14.3px;color:#ccccdc;">Pods</div>
<div class="t m" style="right:492.9px;top:600.18px;font-size:13.9px;color:#ccccdc;">CPU Usage</div>
<div class="t m" style="left:1103.6px;top:600.18px;width:87.1px;overflow:hidden;font-size:13.9px;color:#ccccdc">CPU Requests</div>
<div class="t m" style="right:286.1px;top:600.18px;font-size:13.9px;color:#ccccdc;">CPU Limits</div>
<div class="t m" style="left:1310.4px;top:600.18px;width:87.1px;overflow:hidden;font-size:13.9px;color:#ccccdc">CPU Requests %</div>
<div class="t m" style="left:1413.8px;top:600.18px;width:87.1px;overflow:hidden;font-size:13.9px;color:#ccccdc">CPU Limits %</div>
<div class="t" style="left:793.4px;top:635.25px;font-size:14.3px;color:#ccccdc;">app</div>
<div class="t" style="right:593.6px;top:635.33px;font-size:14.2px;color:#5b93ea;">6</div>
<div class="t" style="right:490.2px;top:635.33px;font-size:14.2px;color:#5b93ea;">0.0041</div>
<div class="t" style="right:386.8px;top:635.33px;font-size:14.2px;color:#5b93ea;">0</div>
<div class="t" style="right:283.4px;top:635.33px;font-size:14.2px;color:#5b93ea;">0</div>
<div class="gauge" style="left:1309.4px;top:627.8px"><i style="width:2.4px"></i></div>
<div class="t m" style="right:190.7px;top:635.50px;font-size:14.0px;color:#73bf69;-webkit-text-stroke-width:0.2px">NaN</div>
<div class="gauge" style="left:1412.8px;top:627.8px"><i style="width:2.4px"></i></div>
<div class="t m" style="right:87.3px;top:635.50px;font-size:14.0px;color:#73bf69;-webkit-text-stroke-width:0.2px">NaN</div>
<div class="t" style="left:793.4px;top:677.10px;font-size:14.3px;color:#ccccdc;">system</div>
<div class="t" style="right:593.6px;top:677.18px;font-size:14.2px;color:#5b93ea;">25</div>
<div class="t" style="right:490.2px;top:677.18px;font-size:14.2px;color:#5b93ea;">0.0249</div>
<div class="t" style="right:386.8px;top:677.18px;font-size:14.2px;color:#5b93ea;">0.9350</div>
<div class="t" style="right:283.4px;top:677.18px;font-size:14.2px;color:#5b93ea;">3.1850</div>
<div class="gauge" style="left:1309.4px;top:670.0px"><i style="width:2.6px"></i></div>
<div class="t m" style="right:190.7px;top:677.35px;font-size:14.0px;color:#73bf69;-webkit-text-stroke-width:0.2px">3%</div>
<div class="gauge" style="left:1412.8px;top:670.0px"><i style="width:2.5px"></i></div>
<div class="t m" style="right:87.3px;top:677.35px;font-size:14.0px;color:#73bf69;-webkit-text-stroke-width:0.2px">1%</div>
<div class="panel" style="left:46.2px;top:772.5px;width:240.6px;height:247px"></div>
<div class="panel" style="left:289.8px;top:772.5px;width:612px;height:247px"></div>
<div class="panel" style="left:901px;top:772.5px;width:614px;height:247px"></div>
<div class="t m" style="left:299.0px;top:781.59px;font-size:14.6px;color:#ccccdc;">namespace: system</div>
<div class="t m" style="left:909.5px;top:781.59px;font-size:14.6px;color:#ccccdc;">namespace: app</div>
<div class="panel" style="left:46.4px;top:1064.4px;width:1486.8px;height:60px"></div>
<div class="t m" style="left:55.5px;top:1073.38px;font-size:14.5px;color:#ccccdc;">Current Network Usage</div>
<div class="a" style="left:0;top:1097px;width:1580px;height:23px;background:#fff"></div>
<div class="a" style="left:31px;top:1096px;width:1517px;height:1px;background:#000"></div>
<div class="a" style="left:1547px;top:1060px;width:1px;height:37px;background:#000"></div>
</body></html>
